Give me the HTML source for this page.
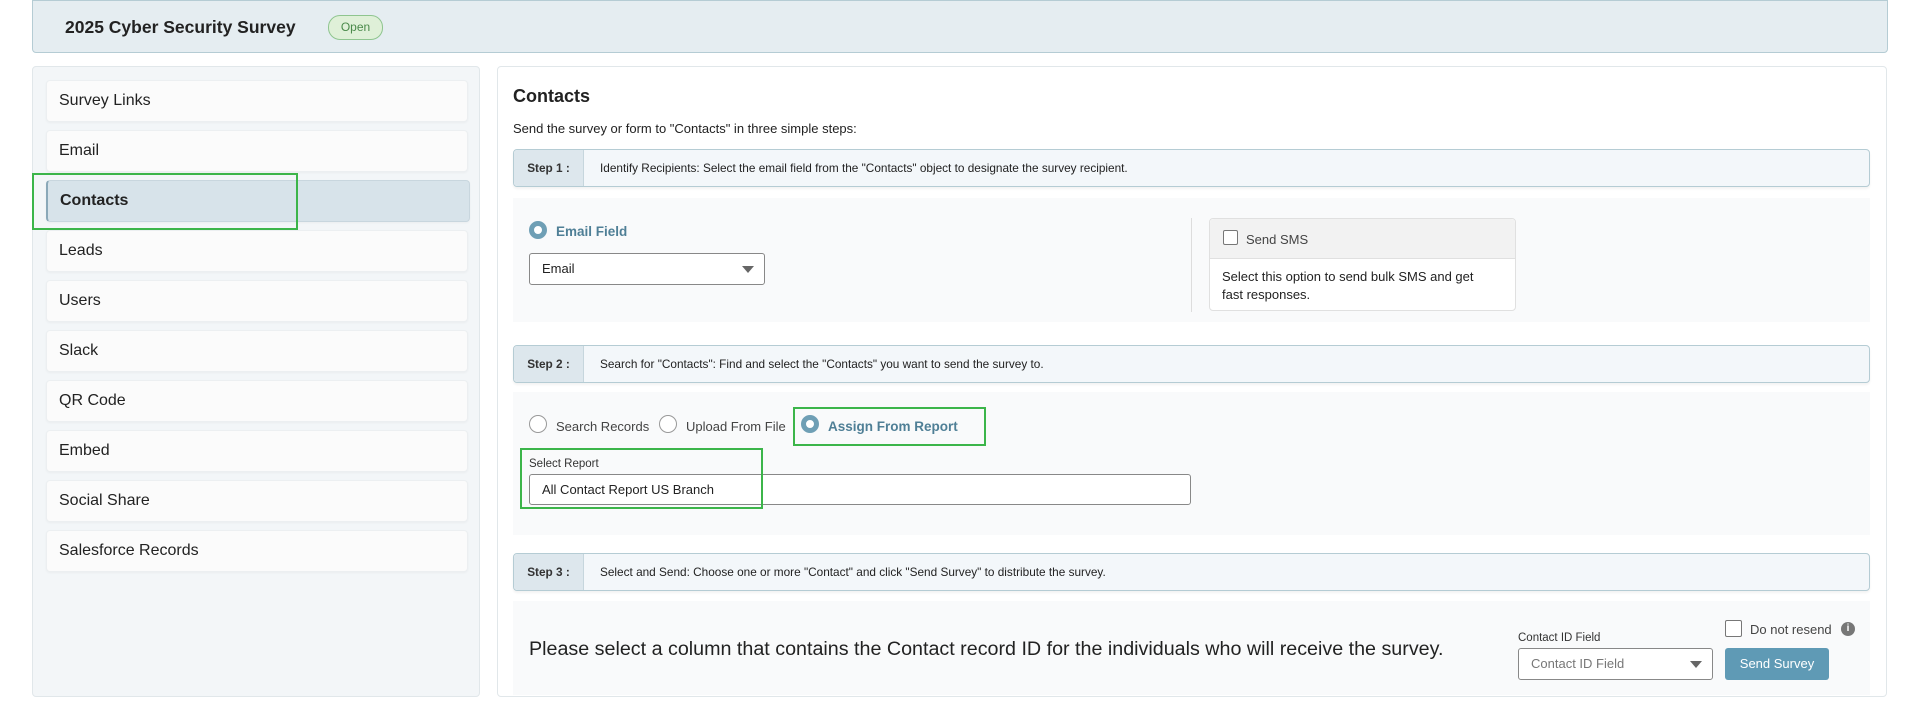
<!DOCTYPE html>
<html><head><meta charset="utf-8"><style>
*{box-sizing:border-box;margin:0;padding:0}
body{width:1920px;height:721px;background:#fff;font-family:"Liberation Sans",sans-serif;color:#222;position:relative;overflow:hidden}
.a{position:absolute}
.hdr{left:32px;top:0;width:1856px;height:53px;background:#e5edf1;border:1px solid #b5ccd4;border-radius:0 0 4px 4px}
.side{left:32px;top:66px;width:448px;height:631px;background:#f3f6f8;border:1px solid #e1e7ea;border-radius:4px}
.item{position:absolute;left:13px;width:422px;height:42px;background:#fbfbfb;border:1px solid #eceff1;border-radius:4px;font-size:16px;padding-left:12px;line-height:40px;box-shadow:0 1px 2px rgba(0,0,0,.04)}
.main{left:497px;top:66px;width:1390px;height:631px;background:#fff;border:1px solid #e1e7ea;border-radius:4px}
.step{position:absolute;left:513px;width:1357px;height:38px;background:#f3f7fa;border:1px solid #b5ccd4;border-radius:4px;font-size:11.8px;line-height:36px;box-shadow:0 2px 2px rgba(0,0,0,.05)}
.step b{display:inline-block;width:70px;height:36px;background:#dde7ed;border-right:1px solid #c6d6dd;text-align:center;font-weight:bold;color:#333;border-radius:4px 0 0 4px}
.step span{padding-left:16px}
.cont{position:absolute;left:513px;width:1357px;background:#f9fafb}
.radio{position:absolute;width:18px;height:18px;border-radius:50%;border:1px solid #999;background:#fff}
.radio.on{border:5px solid #6f9fb5}
.sel{position:absolute;background:#fff;border:1px solid #888;border-radius:3px;font-size:13px;padding-left:12px}
.sel:after{content:"";position:absolute;right:10px;top:50%;margin-top:-3px;border:6px solid transparent;border-top:7px solid #666;border-bottom:none}
.green{position:absolute;border:2px solid #3cb54a}
</style></head><body>
<div class="a hdr"></div>
<div class="a" style="left:65px;top:17px;font-size:17.5px;font-weight:bold;color:#222">2025 Cyber Security Survey</div>
<div class="a" style="left:328px;top:15px;width:55px;height:25px;border:1px solid #8fc58f;background:#dff0d8;border-radius:12px;font-size:12px;color:#4a8a4a;text-align:center;line-height:23px">Open</div>

<div class="a side">
<div class="item" style="top:13px">Survey Links</div>
<div class="item" style="top:63px">Email</div>
<div class="item" style="top:113px;background:#d7e3ea;border-color:#c8d6de;border-left:2px solid #8aa8b8;font-weight:bold;left:13px;width:424px">Contacts</div>
<div class="item" style="top:163px">Leads</div>
<div class="item" style="top:213px">Users</div>
<div class="item" style="top:263px">Slack</div>
<div class="item" style="top:313px">QR Code</div>
<div class="item" style="top:363px">Embed</div>
<div class="item" style="top:413px">Social Share</div>
<div class="item" style="top:463px">Salesforce Records</div>
</div>
<div class="green" style="left:32px;top:173px;width:266px;height:57px"></div>

<div class="a main"></div>
<div class="a" style="left:513px;top:86px;font-size:18px;font-weight:bold">Contacts</div>
<div class="a" style="left:513px;top:121px;font-size:13px">Send the survey or form to "Contacts" in three simple steps:</div>

<div class="step" style="top:149px"><b>Step 1 :</b><span>Identify Recipients: Select the email field from the "Contacts" object to designate the survey recipient.</span></div>
<div class="cont" style="top:198px;height:124px"></div>
<div class="radio on" style="left:529px;top:221px"></div>
<div class="a" style="left:556px;top:224px;font-size:13.5px;font-weight:bold;color:#4f7f96">Email Field</div>
<div class="sel" style="left:529px;top:253px;width:236px;height:32px;line-height:30px">Email</div>
<div class="a" style="left:1191px;top:218px;width:1px;height:94px;background:#ddd"></div>
<div class="a" style="left:1209px;top:218px;width:307px;height:93px;border:1px solid #e0e0e0;border-radius:4px;background:#fff"></div>
<div class="a" style="left:1210px;top:219px;width:305px;height:40px;background:#f2f2f2;border-bottom:1px solid #e0e0e0;border-radius:4px 4px 0 0"></div>
<div class="a" style="left:1223px;top:230px;width:15px;height:15px;border:1px solid #777;border-radius:2px;background:#fff"></div>
<div class="a" style="left:1246px;top:232px;font-size:13px;color:#444">Send SMS</div>
<div class="a" style="left:1222px;top:268px;width:268px;font-size:13px;line-height:18px">Select this option to send bulk SMS and get fast responses.</div>

<div class="step" style="top:345px"><b>Step 2 :</b><span>Search for "Contacts": Find and select the "Contacts" you want to send the survey to.</span></div>
<div class="cont" style="top:392px;height:143px"></div>
<div class="radio" style="left:529px;top:415px"></div>
<div class="a" style="left:556px;top:419px;font-size:13px;color:#444">Search Records</div>
<div class="radio" style="left:659px;top:415px"></div>
<div class="a" style="left:686px;top:419px;font-size:13px;color:#444">Upload From File</div>
<div class="radio on" style="left:801px;top:415px"></div>
<div class="a" style="left:828px;top:419px;font-size:13.5px;font-weight:bold;color:#4f7f96">Assign From Report</div>
<div class="green" style="left:793px;top:407px;width:193px;height:39px"></div>
<div class="a" style="left:529px;top:458px;font-size:11.5px;color:#333">Select Report</div>
<div class="a" style="left:529px;top:474px;width:662px;height:31px;background:#fff;border:1px solid #888;border-radius:3px;font-size:13px;padding-left:12px;line-height:29px">All Contact Report US Branch</div>
<div class="green" style="left:520px;top:448px;width:243px;height:61px"></div>

<div class="step" style="top:553px"><b>Step 3 :</b><span>Select and Send: Choose one or more "Contact" and click "Send Survey" to distribute the survey.</span></div>
<div class="cont" style="top:601px;height:94px"></div>
<div class="a" style="left:529px;top:638px;font-size:19.7px;color:#222">Please select a column that contains the Contact record ID for the individuals who will receive the survey.</div>
<div class="a" style="left:1518px;top:632px;font-size:11.5px;color:#333">Contact ID Field</div>
<div class="sel" style="left:1518px;top:648px;width:195px;height:32px;line-height:30px;color:#777">Contact ID Field</div>
<div class="a" style="left:1725px;top:620px;width:17px;height:17px;border:1px solid #777;border-radius:2px;background:#fff"></div>
<div class="a" style="left:1750px;top:622px;font-size:13px;color:#444">Do not resend</div>
<div class="a" style="left:1841px;top:622px;width:14px;height:14px;border-radius:50%;background:#777;color:#fff;font-size:10px;font-weight:bold;text-align:center;line-height:14px">i</div>
<div class="a" style="left:1725px;top:648px;width:104px;height:32px;background:#5f9ab5;border-radius:3px;color:#fff;font-size:13px;text-align:center;line-height:32px">Send Survey</div>
</body></html>
